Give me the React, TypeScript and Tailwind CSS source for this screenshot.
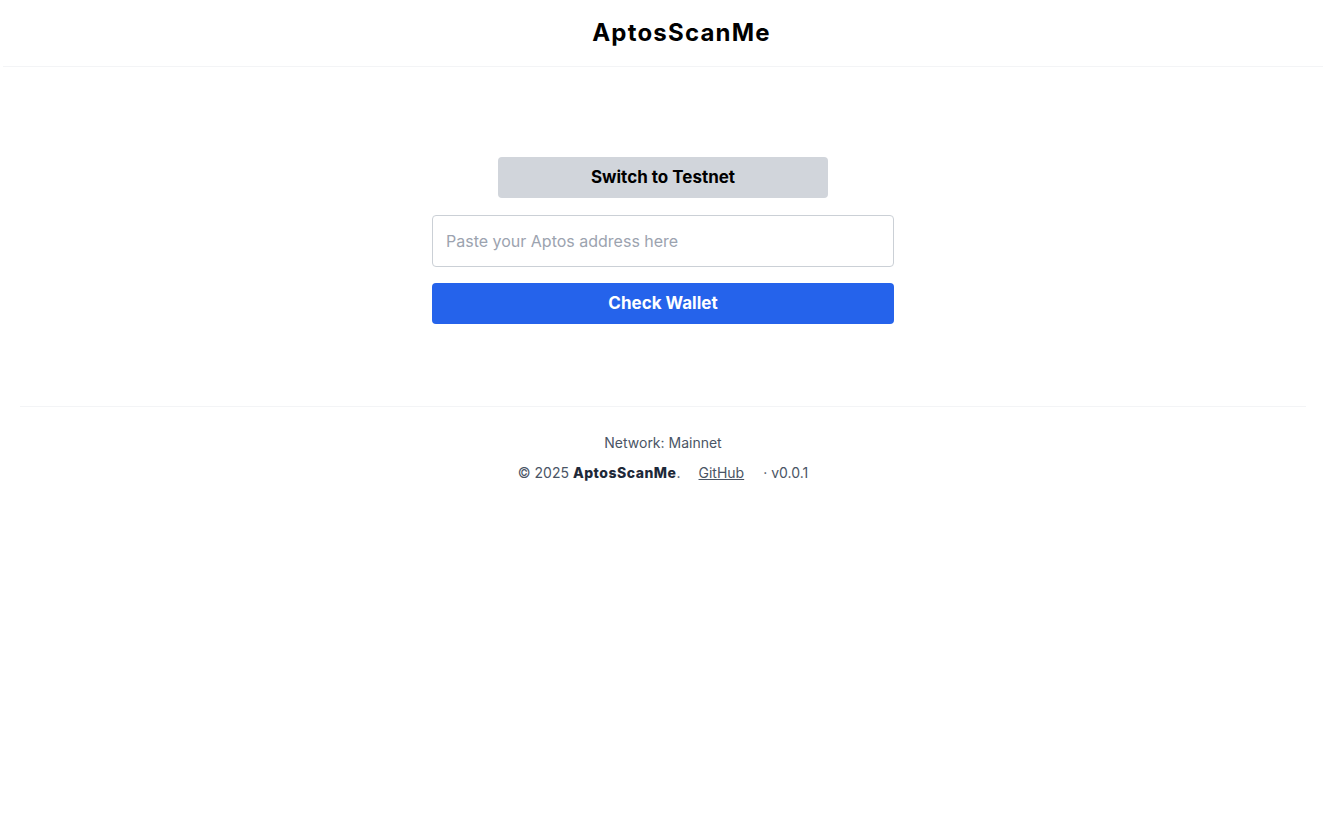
import { useState } from "react";

const App = () => {
  const [address, setAddress] = useState("");

  return (
    <div
      className="min-h-screen bg-white text-gray-900"
      style={{ fontFamily: "Inter, 'Liberation Sans', sans-serif" }}
    >
      <header className="mx-[3px] h-[67px] border-b border-gray-100 flex items-center justify-center pl-[37px]">
        <h1 className="text-[24px] font-bold tracking-[1.2px] text-black">AptosScanMe</h1>
      </header>

      <main className="flex flex-col items-center pt-[90px] pb-[82px]">
        <button className="w-[330px] h-[41px] rounded bg-[#d1d5db] text-[17px] font-bold text-black">
          Switch to Testnet
        </button>
        <input
          value={address}
          onChange={(e) => setAddress(e.target.value)}
          placeholder="Paste your Aptos address here"
          className="mt-[17px] w-[462px] h-[52px] rounded border border-[#cbd0d6] px-[13px] text-[16px] placeholder:text-[#9ca3af] outline-none"
        />
        <button className="mt-[16px] w-[462px] h-[41px] rounded bg-[#2563eb] text-[17px] font-bold text-white">
          Check Wallet
        </button>
      </main>

      <footer className="mx-[20px] border-t border-gray-100 pt-[25px] flex flex-col items-center text-[14px] text-gray-600">
        <p>Network: Mainnet</p>
        <p className="mt-[9px]">
          © 2025 <span className="font-extrabold tracking-[0.5px] text-gray-800">AptosScanMe</span>.
          <a href="#" className="ml-[18px] underline">GitHub</a>
          <span className="ml-[19px]">· v0.0.1</span>
        </p>
      </footer>
    </div>
  );
};

export default App;
